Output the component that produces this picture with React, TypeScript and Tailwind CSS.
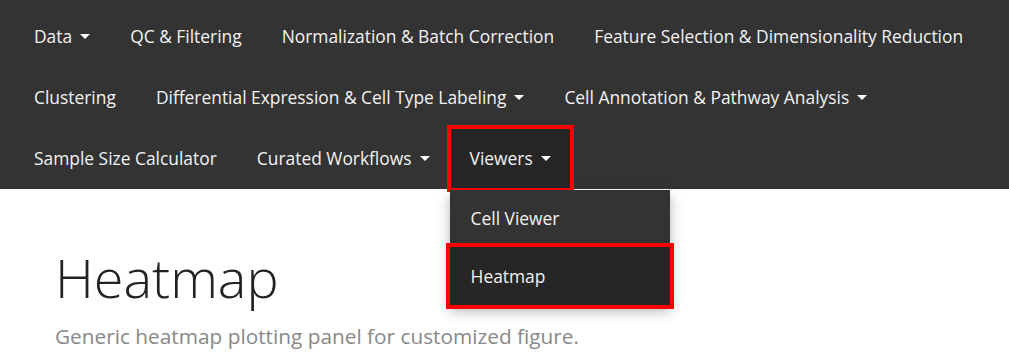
import React from 'react';

const Caret = () => (
  <span className="ml-2 inline-block h-0 w-0 border-x-[5px] border-t-[5px] border-x-transparent border-t-white align-middle" />
);

type Item = { label: string; caret?: boolean; active?: boolean };

const rows: Item[][] = [
  [
    { label: 'Data', caret: true },
    { label: 'QC & Filtering' },
    { label: 'Normalization & Batch Correction' },
    { label: 'Feature Selection & Dimensionality Reduction' },
  ],
  [
    { label: 'Clustering' },
    { label: 'Differential Expression & Cell Type Labeling', caret: true },
    { label: 'Cell Annotation & Pathway Analysis', caret: true },
  ],
  [
    { label: 'Sample Size Calculator' },
    { label: 'Curated Workflows', caret: true },
    { label: 'Viewers', caret: true, active: true },
  ],
];

const NavItem: React.FC<{ item: Item }> = ({ item }) => {
  if (item.active) {
    return (
      <div className="relative">
        <div className="flex h-[61px] items-center bg-[#262626] px-5 text-[#f2f2f2] outline outline-4 outline-[#ff0000] -outline-offset-1">
          {item.label}
          {item.caret && <Caret />}
        </div>
        <div className="absolute left-0 top-[62px] z-10 w-[220px] bg-[#333333] shadow-[0_6px_12px_rgba(0,0,0,0.3)]">
          <div className="flex h-[57px] items-center px-[21px] text-[#f2f2f2]">Cell Viewer</div>
          <div className="flex h-[58px] items-center bg-[#262626] px-[21px] text-[#f2f2f2] outline outline-4 outline-[#ff0000] outline-offset-0">
            Heatmap
          </div>
        </div>
      </div>
    );
  }
  return (
    <div className="flex h-[61px] items-center px-5 text-[#f2f2f2]">
      {item.label}
      {item.caret && <Caret />}
    </div>
  );
};

export default function App() {
  return (
    <div className="min-h-[360px] w-[1009px] bg-white font-['Open_Sans',sans-serif]">
      <nav className="bg-[#333333] pl-[14px] pt-[6px] text-[17.4px]">
        {rows.map((row, i) => (
          <div key={i} className="flex">
            {row.map((item) => (
              <NavItem key={item.label} item={item} />
            ))}
          </div>
        ))}
      </nav>
      <div className="pl-[55px] pt-[53px]">
        <h1 className="text-[54px] font-light leading-[70px] text-[#222222]">Heatmap</h1>
        <p className="mt-[10px] text-[20.8px] leading-[28px] text-[#888888]">Generic heatmap plotting panel for customized figure.</p>
      </div>
    </div>
  );
}
